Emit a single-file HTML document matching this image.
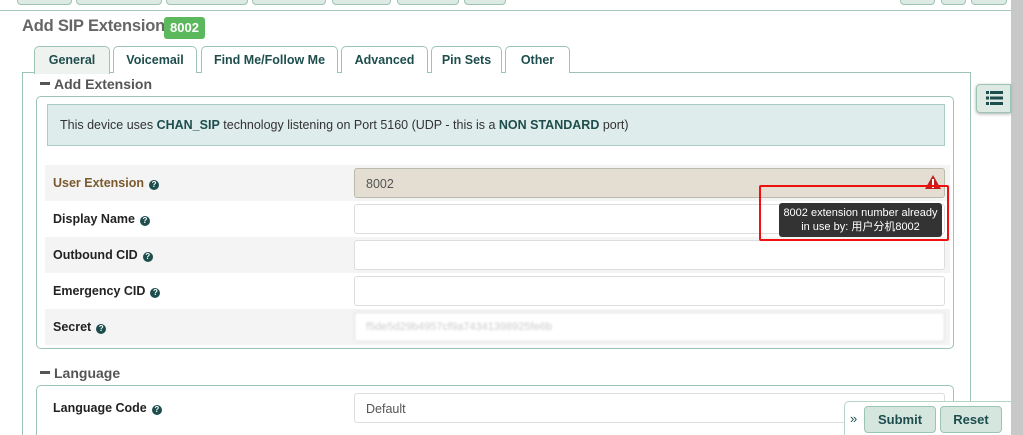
<!DOCTYPE html>
<html style="width:1023px;height:435px;overflow:hidden"><head><meta charset="utf-8"><style>
*{box-sizing:border-box;margin:0;padding:0}
body{width:1023px;height:435px;overflow:hidden;background:#fff;font-family:"Liberation Sans","Noto Sans CJK SC",sans-serif;position:relative;color:#333}
.a{position:absolute}
.nb{position:absolute;top:-12px;height:17px;border:1px solid #9cc4b3;border-radius:4px;background:#dde9e3}
.tab{position:absolute;top:46px;height:27px;border:1px solid #9cc4b3;border-bottom:none;border-radius:5px 5px 0 0;background:#fff;font-size:12.5px;font-weight:bold;color:#1e4d4d;text-align:center;line-height:26px}
.row{position:absolute;left:45px;width:905px;height:36px}
.row.g{background:#f4f4f4}
.lbl{position:absolute;left:8px;top:11px;font-size:12.5px;font-weight:bold;color:#222}
.q{display:inline-block;width:10px;height:10px;border-radius:50%;background:#1e4d4d;color:#fff;font-size:8px;line-height:10px;text-align:center;margin-left:5px;vertical-align:0px}
.inp{position:absolute;left:309px;top:3px;width:591px;height:30px;border:1px solid #ddd;border-radius:3px;background:#fff;font-size:12.5px;color:#555;padding:8px 0 0 11px}
.btn{position:absolute;top:406px;height:27px;border:1px solid #9cc4b3;border-radius:4px;background:#d5e6de;font-size:13px;font-weight:bold;color:#1e4d4d;text-align:center;line-height:25px}
</style></head><body>
<div class="a" style="left:0;top:10px;width:1011px;height:1px;background:#a6cbbb"></div>
<div class="nb" style="left:17px;width:55px"></div><div class="nb" style="left:76px;width:86px"></div><div class="nb" style="left:166px;width:82px"></div><div class="nb" style="left:252px;width:74px"></div><div class="nb" style="left:332px;width:59px"></div><div class="nb" style="left:397px;width:62px"></div><div class="nb" style="left:464px;width:42px"></div>
<div class="nb" style="left:900px;width:35px"></div><div class="nb" style="left:941px;width:25px"></div><div class="nb" style="left:971px;width:36px"></div>
<div class="a" style="left:1011px;top:0;width:12px;height:435px;background:#c8c8c8"></div>
<div class="a" style="left:22px;top:17px;font-size:16.5px;font-weight:bold;color:#666;letter-spacing:-0.2px">Add SIP Extension</div>
<div class="a" style="left:164px;top:17px;width:41px;height:22px;background:#5cb85c;border-radius:3px;color:#fff;font-size:13px;font-weight:bold;text-align:center;line-height:22px">8002</div>
<div class="a" style="left:22px;top:72px;width:949px;height:363px;border:1px solid #9cc4b3;border-bottom:none"></div>
<div class="tab" style="left:34px;width:76px;background:#eef3f0;height:28px">General</div>
<div class="tab" style="left:113px;width:84px">Voicemail</div>
<div class="tab" style="left:201px;width:137px">Find Me/Follow Me</div>
<div class="tab" style="left:341px;width:87px">Advanced</div>
<div class="tab" style="left:431px;width:71px">Pin Sets</div>
<div class="tab" style="left:505px;width:65px">Other</div>
<div class="a" style="left:40px;top:76px;font-size:14px;font-weight:bold;color:#555"><span style="display:inline-block;width:10px;height:3px;background:#555;vertical-align:4px;margin-right:4px"></span>Add Extension</div>
<div class="a" style="left:36px;top:96px;width:918px;height:253px;border:1px solid #9cc4b3;border-radius:5px"></div>
<div class="a" style="left:47px;top:104px;width:898px;height:42px;background:#deeceb;border:1px solid #a9cdc6;font-size:12.5px;color:#333;padding:13px 0 0 12px">This device uses <b style="color:#1e4d4d">CHAN_SIP</b> technology listening on Port 5160 (UDP - this is a <b style="color:#1e4d4d">NON STANDARD</b> port)</div>
<div class="row g" style="top:165px"><div class="lbl" style="color:#7a5a2e">User Extension<span class="q">?</span></div><div class="inp" style="background:#e3ddd2;border-color:#bba">8002</div>
<svg class="a" style="left:879px;top:9px" width="18" height="16" viewBox="0 0 18 16"><path d="M9 1L17 15H1Z" fill="#c0201e"/><rect x="8" y="5" width="2" height="6" fill="#fff"/><rect x="8" y="12" width="2" height="2" fill="#fff"/></svg></div>
<div class="row" style="top:201px"><div class="lbl">Display Name<span class="q">?</span></div><div class="inp"></div></div>
<div class="row g" style="top:237px"><div class="lbl">Outbound CID<span class="q">?</span></div><div class="inp"></div></div>
<div class="row" style="top:273px"><div class="lbl">Emergency CID<span class="q">?</span></div><div class="inp"></div></div>
<div class="row g" style="top:309px"><div class="lbl">Secret<span class="q">?</span></div><div class="inp" style="color:#ccc;filter:blur(1px);font-size:11px">f5de5d29b4957cf9a74341398925fe6b</div></div>
<div class="a" style="left:40px;top:365px;font-size:14px;font-weight:bold;color:#555"><span style="display:inline-block;width:10px;height:3px;background:#555;vertical-align:4px;margin-right:4px"></span>Language</div>
<div class="a" style="left:36px;top:385px;width:918px;height:50px;border:1px solid #9cc4b3;border-bottom:none;border-radius:5px 5px 0 0"></div>
<div class="row" style="top:390px"><div class="lbl">Language Code<span class="q">?</span></div><div class="inp">Default</div></div>
<div class="a" style="left:976px;top:84px;width:35px;height:29px;border:1px solid #9cc4b3;border-radius:4px 0 0 4px;background:#dde9e3;box-shadow:0 1px 3px #aaa"></div>
<svg class="a" style="left:986px;top:91px" width="17" height="14" viewBox="0 0 17 14"><g fill="#1e4d4d"><rect x="0" y="0" width="3" height="3"/><rect x="4" y="0" width="13" height="3"/><rect x="0" y="5.5" width="3" height="3"/><rect x="4" y="5.5" width="13" height="3"/><rect x="0" y="11" width="3" height="3"/><rect x="4" y="11" width="13" height="3"/></g></svg>
<div class="a" style="left:844px;top:401px;width:167px;height:34px;border:1px solid #b5d4c6;border-bottom:none;border-right:none;border-radius:5px 0 0 0;background:#fff"></div>
<div class="a" style="left:850px;top:411px;font-size:13px;color:#1e4d4d">»</div>
<div class="btn" style="left:864px;width:72px">Submit</div>
<div class="btn" style="left:940px;width:62px">Reset</div>
<div class="a" style="left:779px;top:203px;width:163px;height:34px;background:#333;border-radius:3px;color:#fff;font-size:11px;text-align:center;line-height:14px;padding-top:3px">8002 extension number already<br>in use by: 用户分机8002</div>
<div class="a" style="left:759px;top:185px;width:190px;height:56px;border:2px solid #f01010;border-radius:2px"></div>
</body></html>
